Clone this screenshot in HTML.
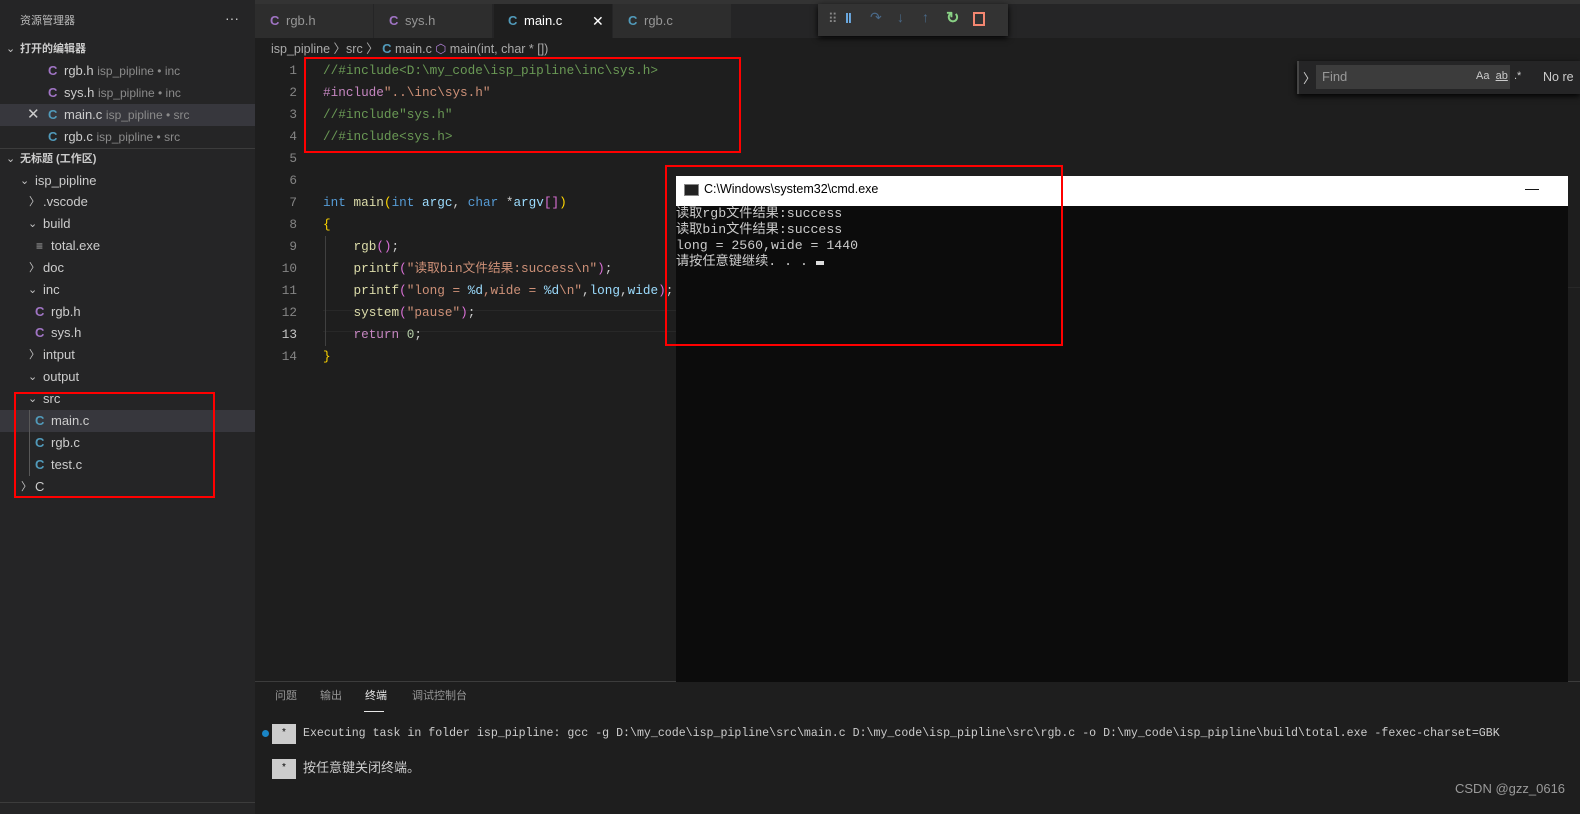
<!DOCTYPE html>
<html><head><meta charset="utf-8"><style>
*{margin:0;padding:0;box-sizing:border-box}
body{width:1580px;height:814px;overflow:hidden;background:#1e1e1e;font-family:"Liberation Sans","Noto Sans CJK SC",sans-serif;color:#ccc;position:relative}
.a{position:absolute;white-space:pre}
.sb{position:absolute;left:0;top:0;width:255px;height:814px;background:#252526}
.row{position:absolute;left:0;width:255px;height:22px;line-height:22px;font-size:13px;color:#ccc}
.sel{background:#37373d}
.ch{position:absolute;font-size:11px;color:#c5c5c5}
.ci{font-weight:bold;font-size:13px}
.h{color:#a074c4}.c{color:#519aba}
.dim{color:#8b8b8b;font-size:12px}
.code{position:absolute;left:255px;font-family:"Liberation Mono","Noto Sans CJK SC",monospace;font-size:12.7px;height:22px;line-height:22px;width:421px;white-space:pre}
.ln{position:absolute;left:0;width:42px;text-align:right;color:#858585}
.tx{position:absolute;left:68px;white-space:pre}
.cm{color:#6a9955}.kw{color:#569cd6}.fn{color:#dcdcaa}.st{color:#ce9178}.pp{color:#c586c0}.vr{color:#9cdcfe}.y{color:#ffd700}.p{color:#da70d6}.nm{color:#b5cea8}
.red{position:absolute;border:2px solid #f00;z-index:5}
.tab{position:absolute;top:4px;height:34px;line-height:34px;font-size:13px;background:#2d2d2d;color:#969696}
</style></head><body>
<div class="a" style="left:0;top:0;width:1580px;height:4px;background:#333"></div>
<div class="sb"></div>
<div class="a" style="left:20px;top:12px;font-size:11px;color:#bbb;line-height:18px">资源管理器</div>
<div class="a" style="left:225px;top:10px;font-size:14px;color:#ccc">···</div>
<div class="row" style="top:38px"><span class="ch" style="left:6px">&#8964;</span><span class="a" style="left:20px;font-weight:bold;font-size:11px">打开的编辑器</span></div>
<div class="row" style="top:60px"><span class="a ci h" style="left:48px">C</span><span class="a" style="left:64px">rgb.h <span class="dim">isp_pipline • inc</span></span></div>
<div class="row" style="top:82px"><span class="a ci h" style="left:48px">C</span><span class="a" style="left:64px">sys.h <span class="dim">isp_pipline • inc</span></span></div>
<div class="row sel" style="top:104px"><span class="a" style="left:27px;font-size:15px">✕</span><span class="a ci c" style="left:48px">C</span><span class="a" style="left:64px">main.c <span class="dim">isp_pipline • src</span></span></div>
<div class="row" style="top:126px"><span class="a ci c" style="left:48px">C</span><span class="a" style="left:64px">rgb.c <span class="dim">isp_pipline • src</span></span></div>
<div class="a" style="left:0;top:148px;width:255px;height:1px;background:#3c3c3c"></div>
<div class="row" style="top:148px"><span class="ch" style="left:6px">&#8964;</span><span class="a" style="left:20px;font-weight:bold;font-size:11px">无标题 (工作区)</span></div>
<div class="row" style="top:170px"><span class="ch" style="left:20px">&#8964;</span><span class="a" style="left:35px">isp_pipline</span></div>
<div class="row" style="top:191px"><span class="ch" style="left:29px">〉</span><span class="a" style="left:43px">.vscode</span></div>
<div class="row" style="top:213px"><span class="ch" style="left:28px">&#8964;</span><span class="a" style="left:43px">build</span></div>
<div class="row" style="top:235px"><span class="a" style="left:36px;font-size:12px;color:#aaa">≡</span><span class="a" style="left:51px">total.exe</span></div>
<div class="row" style="top:257px"><span class="ch" style="left:29px">〉</span><span class="a" style="left:43px">doc</span></div>
<div class="row" style="top:279px"><span class="ch" style="left:28px">&#8964;</span><span class="a" style="left:43px">inc</span></div>
<div class="row" style="top:301px"><span class="a ci h" style="left:35px">C</span><span class="a" style="left:51px">rgb.h</span></div>
<div class="row" style="top:322px"><span class="a ci h" style="left:35px">C</span><span class="a" style="left:51px">sys.h</span></div>
<div class="row" style="top:344px"><span class="ch" style="left:29px">〉</span><span class="a" style="left:43px">intput</span></div>
<div class="row" style="top:366px"><span class="ch" style="left:28px">&#8964;</span><span class="a" style="left:43px">output</span></div>
<div class="row" style="top:388px"><span class="ch" style="left:28px">&#8964;</span><span class="a" style="left:43px">src</span></div>
<div class="row sel" style="top:410px"><span class="a ci c" style="left:35px">C</span><span class="a" style="left:51px">main.c</span></div>
<div class="row" style="top:432px"><span class="a ci c" style="left:35px">C</span><span class="a" style="left:51px">rgb.c</span></div>
<div class="row" style="top:454px"><span class="a ci c" style="left:35px">C</span><span class="a" style="left:51px">test.c</span></div>
<div class="a" style="left:29px;top:410px;width:1px;height:66px;background:#585858"></div>
<div class="row" style="top:476px"><span class="ch" style="left:21px">〉</span><span class="a" style="left:35px">C</span></div>
<div class="a" style="left:0;top:802px;width:255px;height:1px;background:#3c3c3c"></div>
<div class="red" style="left:14px;top:392px;width:201px;height:106px"></div>

<div class="a" style="left:255px;top:4px;width:1325px;height:34px;background:#252526"></div>
<div class="tab" style="left:255px;width:118px"><span class="a ci h" style="left:15px">C</span><span class="a" style="left:31px">rgb.h</span></div>
<div class="tab" style="left:374px;width:118px"><span class="a ci h" style="left:15px">C</span><span class="a" style="left:31px">sys.h</span></div>
<div class="tab" style="left:494px;width:118px;background:#1e1e1e;color:#fff"><span class="a ci c" style="left:14px">C</span><span class="a" style="left:30px">main.c</span><span class="a" style="left:98px;font-size:14px">✕</span></div>
<div class="tab" style="left:613px;width:118px"><span class="a ci c" style="left:15px">C</span><span class="a" style="left:31px">rgb.c</span></div>
<div class="a" style="left:818px;top:4px;width:190px;height:32px;background:#333;box-shadow:0 2px 6px #000"></div>
<div class="a" style="left:828px;top:11px;font-size:13px;color:#888">⠿</div>
<div class="a" style="left:845px;top:10px;font-size:14px;color:#75beff;font-weight:bold">‖</div>
<div class="a" style="left:870px;top:9px;font-size:14px;color:#4a6a8a">↷</div>
<div class="a" style="left:897px;top:9px;font-size:14px;color:#4a6a8a">↓</div>
<div class="a" style="left:922px;top:9px;font-size:14px;color:#4a6a8a">↑</div>
<div class="a" style="left:946px;top:8px;font-size:16px;color:#89d185;font-weight:bold">↻</div>
<div class="a" style="left:973px;top:12px;width:12px;height:14px;border:2px solid #f48771"></div>

<div class="a" style="left:271px;top:41px;font-size:12.5px;color:#aaa;line-height:16px">isp_pipline 〉src 〉 <b class="c" style="font-size:13px">C</b> main.c <span style="color:#b180d7">⬡</span> main(int, char * [])</div>

<div class="a" style="left:1297px;top:61px;width:283px;height:33px;background:#252526;box-shadow:0 2px 6px #000;border-left:2px solid #454545"></div>
<div class="a" style="left:1303px;top:68px;font-size:13px;color:#ccc">〉</div>
<div class="a" style="left:1316px;top:65px;width:194px;height:24px;background:#3c3c3c"></div>
<div class="a" style="left:1322px;top:69px;font-size:13px;color:#999">Find</div>
<div class="a" style="left:1476px;top:70px;font-size:11px;color:#ccc">Aa  <u>ab</u>  .*</div>
<div class="a" style="left:1543px;top:70px;font-size:12.5px;color:#ccc">No re</div>

<div class="code" style="top:60px"><span class="ln">1</span><span class="tx cm">//#include&lt;D:\my_code\isp_pipline\inc\sys.h&gt;</span></div>
<div class="code" style="top:82px"><span class="ln">2</span><span class="tx"><span class="pp">#include</span><span class="st">"..\inc\sys.h"</span></span></div>
<div class="code" style="top:104px"><span class="ln">3</span><span class="tx cm">//#include"sys.h"</span></div>
<div class="code" style="top:126px"><span class="ln">4</span><span class="tx cm">//#include&lt;sys.h&gt;</span></div>
<div class="code" style="top:148px"><span class="ln">5</span></div>
<div class="code" style="top:170px"><span class="ln">6</span></div>
<div class="code" style="top:192px"><span class="ln">7</span><span class="tx"><span class="kw">int</span> <span class="fn">main</span><span class="y">(</span><span class="kw">int</span> <span class="vr">argc</span>, <span class="kw">char</span> *<span class="vr">argv</span><span class="p">[]</span><span class="y">)</span></span></div>
<div class="code" style="top:214px"><span class="ln">8</span><span class="tx y">{</span></div>
<div class="code" style="top:236px"><span class="ln">9</span><span class="tx">    <span class="fn">rgb</span><span class="p">()</span>;</span></div>
<div class="code" style="top:258px"><span class="ln">10</span><span class="tx">    <span class="fn">printf</span><span class="p">(</span><span class="st">"读取bin文件结果:success\n"</span><span class="p">)</span>;</span></div>
<div class="code" style="top:280px"><span class="ln">11</span><span class="tx">    <span class="fn">printf</span><span class="p">(</span><span class="st">"long = <span class="vr">%d</span>,wide = <span class="vr">%d</span>\n"</span>,<span class="vr">long</span>,<span class="vr">wide</span><span class="p">)</span>;</span></div>
<div class="a" style="left:323px;top:310px;width:353px;height:22px;border-top:1px solid #282828;border-bottom:1px solid #282828"></div>
<div class="code" style="top:302px"><span class="ln">12</span><span class="tx">    <span class="fn">system</span><span class="p">(</span><span class="st">"pause"</span><span class="p">)</span>;</span></div>
<div class="code" style="top:324px"><span class="ln" style="color:#c6c6c6">13</span><span class="tx">    <span class="pp">return</span> <span class="nm">0</span>;</span></div>
<div class="code" style="top:346px"><span class="ln">14</span><span class="tx y">}</span></div>
<div class="a" style="left:325px;top:236px;width:1px;height:110px;background:#404040"></div>
<div class="a" style="left:676px;top:287px;width:904px;height:1px;background:#282828"></div>
<div class="red" style="left:304px;top:57px;width:437px;height:96px"></div>

<div class="a" style="left:676px;top:176px;width:892px;height:30px;background:#fff;z-index:2"></div>
<div class="a" style="left:684px;top:184px;width:15px;height:12px;background:#222;border:1px solid #888;z-index:3"></div>
<div class="a" style="left:704px;top:182px;font-size:12.5px;color:#000;z-index:3">C:\Windows\system32\cmd.exe</div>
<div class="a" style="left:1525px;top:180px;font-size:14px;color:#000;z-index:3">—</div>
<div class="a" style="left:676px;top:206px;width:892px;height:476px;background:#0c0c0c;z-index:2"></div>
<div class="a" style="left:676px;top:206px;font-family:'Liberation Mono','Noto Sans CJK SC',monospace;font-size:13.2px;line-height:16px;color:#ccc;z-index:3">读取rgb文件结果:success
读取bin文件结果:success
long = 2560,wide = 1440
请按任意键继续. . . <span style="display:inline-block;width:8px;height:4px;background:#ddd"></span></div>
<div class="red" style="left:665px;top:165px;width:398px;height:181px"></div>

<div class="a" style="left:255px;top:681px;width:1325px;height:1px;background:#3c3c3c"></div>
<div class="a" style="left:275px;top:688px;font-size:11px;color:#969696;line-height:16px">问题</div>
<div class="a" style="left:320px;top:688px;font-size:11px;color:#969696;line-height:16px">输出</div>
<div class="a" style="left:365px;top:688px;font-size:11px;color:#e7e7e7;line-height:16px">终端</div>
<div class="a" style="left:364px;top:711px;width:20px;height:1px;background:#e7e7e7"></div>
<div class="a" style="left:412px;top:688px;font-size:11px;color:#969696;line-height:16px">调试控制台</div>
<div class="a" style="left:262px;top:730px;width:7px;height:7px;border-radius:50%;background:#1a85c6"></div>
<div class="a" style="left:272px;top:724px;width:24px;height:20px;background:#ccc;color:#000;font-size:10px;text-align:center;line-height:18px">*</div>
<div class="a" style="left:303px;top:725px;font-family:'Liberation Mono',monospace;font-size:11.6px;line-height:18px;color:#ccc">Executing task in folder isp_pipline: gcc -g D:\my_code\isp_pipline\src\main.c D:\my_code\isp_pipline\src\rgb.c -o D:\my_code\isp_pipline\build\total.exe -fexec-charset=GBK</div>
<div class="a" style="left:272px;top:759px;width:24px;height:20px;background:#ccc;color:#000;font-size:10px;text-align:center;line-height:18px">*</div>
<div class="a" style="left:303px;top:760px;font-family:'Liberation Mono','Noto Sans CJK SC',monospace;font-size:13px;line-height:18px;color:#ccc">按任意键关闭终端。</div>
<div class="a" style="left:1455px;top:781px;font-size:13px;color:#9a9a9a">CSDN @gzz_0616</div>
</body></html>
